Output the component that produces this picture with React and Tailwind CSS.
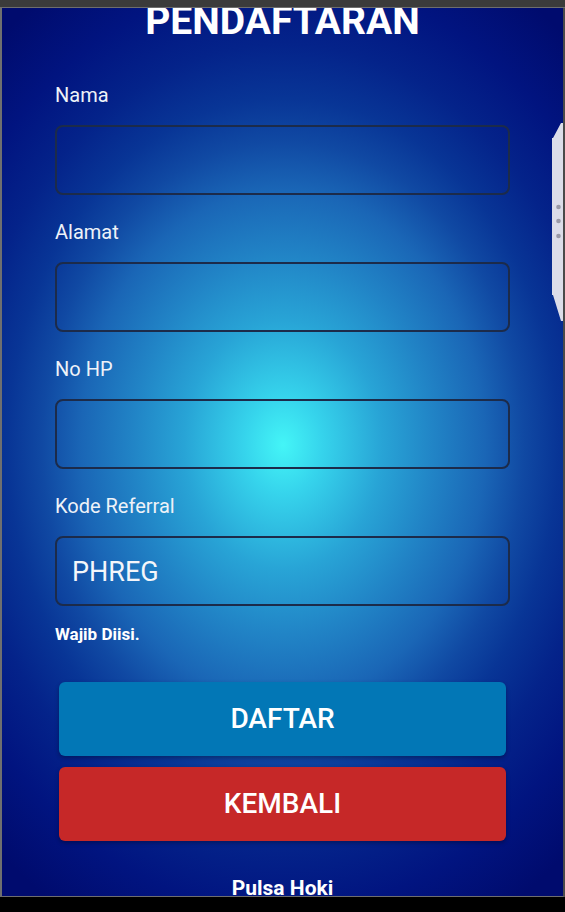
const fields = [
  { label: 'Nama', value: '' },
  { label: 'Alamat', value: '' },
  { label: 'No HP', value: '' },
  { label: 'Kode Referral', value: 'PHREG' },
];

const Field = ({ label, value, first }) => {
  return (
    <div className={first ? 'mt-[42px]' : 'mt-[25px]'}>
      <div className="text-[20px] leading-[24px] text-[#eef2f8]">{label}</div>
      <div className="mt-[18px] h-[70px] rounded-[8px] border-2 border-[#1c2b4a] flex items-center pl-[15px] pt-[2px]">
        <span className="text-[27px] leading-none text-[#f4f6fa]">{value}</span>
      </div>
    </div>
  );
};

const SideHandle = () => {
  return (
    <div className="absolute right-0 top-[115px] flex">
      <svg width="11" height="198" viewBox="0 0 11 198">
        <polygon points="9,0 11,0 11,198 9,198 1,172 0,172 0,15 1,15" fill="#dcdde9" />
        <circle cx="6.5" cy="84" r="2.3" fill="#9a9aa8" />
        <circle cx="6.5" cy="98" r="2.3" fill="#9a9aa8" />
        <circle cx="6.5" cy="113" r="2.3" fill="#9a9aa8" />
      </svg>
    </div>
  );
};

export default function App() {
  return (
    <div className="w-[565px] h-[912px] bg-black overflow-hidden font-['Roboto',sans-serif]">
      <div className="h-[8px] bg-[#3b3b3b] border-b border-[#6e6e6e]" />
      <main className="relative h-[889px] overflow-hidden border-l-2 border-l-[#6f6f6f] border-r-2 border-r-[#4a4a4a] border-b border-b-[#6e6e6e] bg-[radial-gradient(ellipse_430px_542px_at_281px_437px,#44f5f7_0%,#36d4ec_9%,#28a4d6_23%,#2184c6_35%,#1a66b6_47%,#1049a3_56%,#083596_64%,#04238a_74%,#011480_86%,#000b6e_100%)]">
        <div className="px-[53px]">
          <h1 className="mt-[-6px] h-[39px] text-[39px] leading-[39px] font-bold text-center text-white">
            PENDAFTARAN
          </h1>

          {fields.map((f, i) => (
            <Field key={f.label} label={f.label} value={f.value} first={i === 0} />
          ))}

          <p className="mt-[18px] text-[17px] leading-[20px] font-bold text-white">Wajib Diisi.</p>

          <div className="mx-[4px]">
            <button className="mt-[38px] w-full h-[74px] rounded-[6px] bg-[#0277b6] text-white text-[28px] font-medium shadow-[0_2px_4px_rgba(0,0,0,0.3)]">
              DAFTAR
            </button>
            <button className="mt-[11px] w-full h-[74px] rounded-[6px] bg-[#c62828] text-white text-[28px] font-medium shadow-[0_2px_4px_rgba(0,0,0,0.3)]">
              KEMBALI
            </button>
          </div>

          <p className="mt-[35px] text-[21px] leading-[24px] font-bold text-center text-white">Pulsa Hoki</p>
        </div>
        <SideHandle />
      </main>
    </div>
  );
}
